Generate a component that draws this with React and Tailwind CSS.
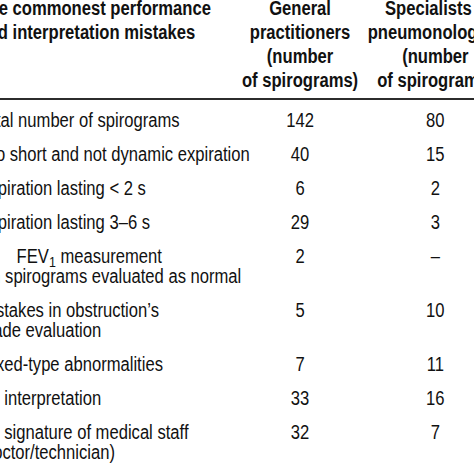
import React from 'react';

// Arial-metric font squeezed horizontally to stand in for the condensed face
const font = {
  fontFamily: "'Liberation Sans', Arial, sans-serif",
};

const rows = [
  { label: [['Total number of spirograms']], gp: '142', sp: '80' },
  { label: [['Too short and not dynamic expiration']], gp: '40', sp: '15' },
  { label: [['Expiration lasting < 2 s']], gp: '6', sp: '2' },
  { label: [['Expiration lasting 3–6 s']], gp: '29', sp: '3' },
  {
    label: [
      [
        <>
          FEV<sub>1</sub> measurement
        </>,
        'pl-[46px]',
      ],
      ['in spirograms evaluated as normal', 'pl-[11px]'],
    ],
    gp: '2',
    sp: '–',
  },
  { label: [['Mistakes in obstruction’s'], ['grade evaluation']], gp: '5', sp: '10' },
  { label: [['Mixed-type abnormalities']], gp: '7', sp: '11' },
  { label: [['No interpretation']], gp: '33', sp: '16' },
  { label: [['No signature of medical staff'], ['(doctor/technician)']], gp: '32', sp: '7' },
];

const App = () => {
  return (
    <div className="h-[474px] w-[474px] overflow-hidden bg-white text-[#111]" style={font}>
      <div className="w-[640px] origin-top-left scale-x-[0.83]">
        <div className="-ml-[26px] -mt-[4px] w-[640px] whitespace-nowrap">
          <div className="grid grid-cols-[306px_163px_163px] border-b-2 border-[#2c2c2c] pb-[6px] text-[20px] font-bold leading-[24px]">
            <div>
              <div>The commonest performance</div>
              <div>and interpretation mistakes</div>
            </div>
            <div className="text-center">
              <div>General</div>
              <div>practitioners</div>
              <div>(number</div>
              <div>of spirograms)</div>
            </div>
            <div className="text-center">
              <div>Specialists –</div>
              <div>pneumonologists</div>
              <div>(number</div>
              <div>of spirograms)</div>
            </div>
          </div>

          <div className="pt-[3px] text-[20px] leading-[20px]">
            {rows.map((row, i) => (
              <div key={i} className="grid grid-cols-[306px_163px_163px] py-[7px]">
                <div>
                  {row.label.map(([text, pad], j) => (
                    <div key={j} className={pad || ''}>
                      {text}
                    </div>
                  ))}
                </div>
                <div className="text-center">{row.gp}</div>
                <div className="text-center">{row.sp}</div>
              </div>
            ))}
          </div>
        </div>
      </div>
    </div>
  );
};

export default App;
